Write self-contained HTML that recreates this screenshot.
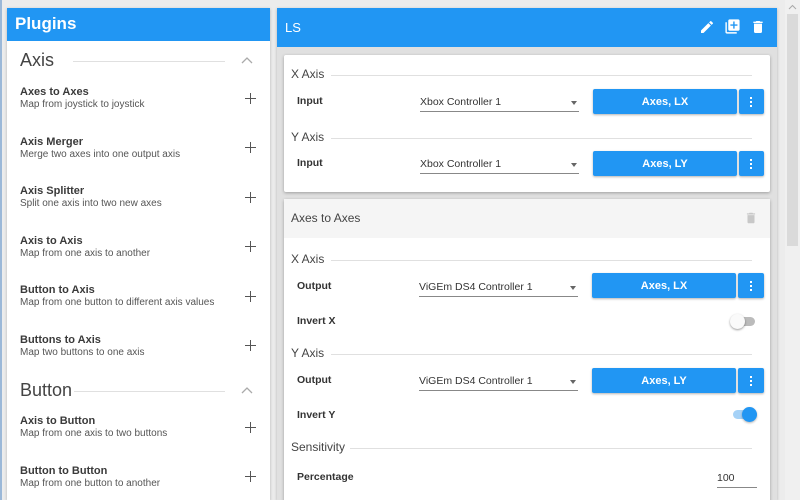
<!DOCTYPE html>
<html><head><meta charset="utf-8"><style>
*{margin:0;padding:0;box-sizing:border-box}
html,body{width:800px;height:500px;overflow:hidden}
body{background:#ececec;font-family:"Liberation Sans",sans-serif;color:#333;position:relative}
.a{position:absolute;white-space:nowrap}
.blue{background:#2196f3}
.t{font-size:11px;font-weight:bold;color:#3a3a3a}
.d{font-size:10px;color:#555}
.line{position:absolute;height:1px;background:#e0e0e0}
.plus{position:absolute;width:11px;height:11px}
.plus:before{content:"";position:absolute;left:5px;top:0;width:1px;height:11px;background:#555}
.plus:after{content:"";position:absolute;top:5px;left:0;width:11px;height:1px;background:#555}
.sec{font-size:12px;color:#444}
.lbl{font-size:10.5px;font-weight:bold;color:#333}
.sel{position:absolute;width:159px;height:20px;border-bottom:1px solid #888;font-size:10.5px;color:#333;padding-top:4px}
.sel:after{content:"";position:absolute;right:2px;top:9px;border:3.5px solid transparent;border-top:4px solid #666}
.btn{position:absolute;height:25px;background:#2196f3;color:#fff;font-size:11px;font-weight:bold;text-align:center;line-height:26px;border-radius:2px;box-shadow:0 1px 2px rgba(0,0,0,.3)}
.dots{position:absolute;width:2px;height:2px;background:#fff;box-shadow:0 4px 0 #fff,0 8px 0 #fff;top:8px}
</style></head><body>
<div class="a" style="left:0;top:0;width:2px;height:500px;background:#9bb8d8"></div>
<!-- left panel -->
<div class="a" style="left:7px;top:8px;width:263px;height:492px;background:#fff;box-shadow:0 1px 3px rgba(0,0,0,.25)"></div>
<div class="a blue" style="left:7px;top:8px;width:263px;height:33px"></div>
<div class="a" style="left:15px;top:14px;font-size:17px;font-weight:bold;color:#fff">Plugins</div>

<div class="a" style="left:20px;top:50px;font-size:18px;color:#444">Axis</div>
<div class="line" style="left:73px;top:61px;width:152px"></div>
<svg class="a" style="left:241px;top:56px" width="12" height="8"><path d="M1 7 L6 2 L11 7" fill="none" stroke="#aaa" stroke-width="1.3"/></svg>

<div class="a t" style="left:20px;top:86px">Axes to Axes</div><div class="a d" style="left:20px;top:99px">Map from joystick to joystick</div><div class="plus" style="left:245px;top:93px"></div>
<div class="a t" style="left:20px;top:136px">Axis Merger</div><div class="a d" style="left:20px;top:149px">Merge two axes into one output axis</div><div class="plus" style="left:245px;top:142px"></div>
<div class="a t" style="left:20px;top:185px">Axis Splitter</div><div class="a d" style="left:20px;top:198px">Split one axis into two new axes</div><div class="plus" style="left:245px;top:192px"></div>
<div class="a t" style="left:20px;top:235px">Axis to Axis</div><div class="a d" style="left:20px;top:248px">Map from one axis to another</div><div class="plus" style="left:245px;top:241px"></div>
<div class="a t" style="left:20px;top:284px">Button to Axis</div><div class="a d" style="left:20px;top:297px">Map from one button to different axis values</div><div class="plus" style="left:245px;top:291px"></div>
<div class="a t" style="left:20px;top:334px">Buttons to Axis</div><div class="a d" style="left:20px;top:347px">Map two buttons to one axis</div><div class="plus" style="left:245px;top:340px"></div>

<div class="a" style="left:20px;top:380px;font-size:18px;color:#444">Button</div>
<div class="line" style="left:74px;top:391px;width:151px"></div>
<svg class="a" style="left:241px;top:386px" width="12" height="8"><path d="M1 7 L6 2 L11 7" fill="none" stroke="#aaa" stroke-width="1.3"/></svg>
<div class="a t" style="left:20px;top:415px">Axis to Button</div><div class="a d" style="left:20px;top:428px">Map from one axis to two buttons</div><div class="plus" style="left:245px;top:422px"></div>
<div class="a t" style="left:20px;top:465px">Button to Button</div><div class="a d" style="left:20px;top:478px">Map from one button to another</div><div class="plus" style="left:245px;top:471px"></div>

<!-- right panel -->
<div class="a" style="left:277px;top:8px;width:500px;height:492px;background:#e0e0e0;box-shadow:0 1px 3px rgba(0,0,0,.25)"></div>
<div class="a blue" style="left:277px;top:8px;width:500px;height:39px"></div>
<div class="a" style="left:285px;top:20px;font-size:13px;color:#fff">LS</div>
<svg class="a" style="left:699px;top:19px" width="16" height="16" viewBox="0 0 24 24"><path fill="#fff" d="M3 17.25V21h3.75L17.81 9.94l-3.75-3.75L3 17.25zM20.71 7.04a1 1 0 000-1.41l-2.34-2.34a1 1 0 00-1.41 0l-1.83 1.83 3.75 3.75 1.83-1.83z"/></svg>
<svg class="a" style="left:724px;top:18px" width="17" height="17" viewBox="0 0 24 24"><path fill="#fff" d="M4 6H2v14c0 1.1.9 2 2 2h14v-2H4V6zm16-4H8c-1.1 0-2 .9-2 2v12c0 1.1.9 2 2 2h12c1.1 0 2-.9 2-2V4c0-1.1-.9-2-2-2zm-1 9h-4v4h-2v-4H9V9h4V5h2v4h4v2z"/></svg>
<svg class="a" style="left:750px;top:19px" width="16" height="16" viewBox="0 0 24 24"><path fill="#fff" d="M6 19c0 1.1.9 2 2 2h8c1.1 0 2-.9 2-2V7H6v12zM19 4h-3.5l-1-1h-5l-1 1H5v2h14V4z"/></svg>

<!-- card 1 -->
<div class="a" style="left:284px;top:55px;width:486px;height:137px;background:#fff;border-radius:2px;box-shadow:0 1px 3px rgba(0,0,0,.3)"></div>
<div class="a sec" style="left:291px;top:67px">X Axis</div><div class="line" style="left:331px;top:75px;width:421px"></div>
<div class="a lbl" style="left:297px;top:95px">Input</div>
<div class="sel" style="left:420px;top:92px">Xbox Controller 1</div>
<div class="btn" style="left:593px;top:89px;width:144px">Axes, LX</div>
<div class="btn" style="left:739px;top:89px;width:25px"><div class="dots" style="left:11px"></div></div>
<div class="a sec" style="left:291px;top:130px">Y Axis</div><div class="line" style="left:331px;top:138px;width:421px"></div>
<div class="a lbl" style="left:297px;top:157px">Input</div>
<div class="sel" style="left:420px;top:154px">Xbox Controller 1</div>
<div class="btn" style="left:593px;top:151px;width:144px">Axes, LY</div>
<div class="btn" style="left:739px;top:151px;width:25px"><div class="dots" style="left:11px"></div></div>

<!-- card 2 -->
<div class="a" style="left:284px;top:199px;width:486px;height:310px;background:#fff;border-radius:2px;box-shadow:0 1px 3px rgba(0,0,0,.3)"></div>
<div class="a" style="left:284px;top:199px;width:486px;height:39px;background:#f5f5f5"></div>
<div class="a" style="left:291px;top:211px;font-size:12px;color:#444">Axes to Axes</div>
<svg class="a" style="left:744px;top:211px" width="14" height="14" viewBox="0 0 24 24"><path fill="#c8c8c8" d="M6 19c0 1.1.9 2 2 2h8c1.1 0 2-.9 2-2V7H6v12zM19 4h-3.5l-1-1h-5l-1 1H5v2h14V4z"/></svg>

<div class="a sec" style="left:291px;top:252px">X Axis</div><div class="line" style="left:331px;top:260px;width:421px"></div>
<div class="a lbl" style="left:297px;top:280px">Output</div>
<div class="sel" style="left:419px;top:277px">ViGEm DS4 Controller 1</div>
<div class="btn" style="left:592px;top:273px;width:144px">Axes, LX</div>
<div class="btn" style="left:738px;top:273px;width:26px"><div class="dots" style="left:12px"></div></div>
<div class="a lbl" style="left:297px;top:315px">Invert X</div>
<div class="a" style="left:731px;top:317px;width:24px;height:9px;border-radius:5px;background:#bbb"></div>
<div class="a" style="left:730px;top:314px;width:15px;height:15px;border-radius:50%;background:#fafafa;box-shadow:0 1px 2px rgba(0,0,0,.4)"></div>

<div class="a sec" style="left:291px;top:346px">Y Axis</div><div class="line" style="left:331px;top:354px;width:421px"></div>
<div class="a lbl" style="left:297px;top:374px">Output</div>
<div class="sel" style="left:419px;top:371px">ViGEm DS4 Controller 1</div>
<div class="btn" style="left:592px;top:368px;width:144px">Axes, LY</div>
<div class="btn" style="left:738px;top:368px;width:26px"><div class="dots" style="left:12px"></div></div>
<div class="a lbl" style="left:297px;top:409px">Invert Y</div>
<div class="a" style="left:733px;top:410px;width:24px;height:9px;border-radius:5px;background:#a6d2f7"></div>
<div class="a" style="left:742px;top:407px;width:15px;height:15px;border-radius:50%;background:#2196f3;box-shadow:0 1px 2px rgba(0,0,0,.3)"></div>

<div class="a sec" style="left:291px;top:440px">Sensitivity</div><div class="line" style="left:350px;top:448px;width:402px"></div>
<div class="a lbl" style="left:297px;top:471px">Percentage</div>
<div class="a" style="left:717px;top:472px;width:40px;height:16px;border-bottom:1px solid #888;font-size:10.5px;color:#333">100</div>

<!-- scrollbar -->
<div class="a" style="left:785px;top:0;width:15px;height:500px;background:#f0f0f0"></div>
<div class="a" style="left:787px;top:14px;width:11px;height:232px;background:#dadada"></div>
<svg class="a" style="left:788px;top:4px" width="9" height="6"><path d="M1 5 L4.5 1.5 L8 5" fill="none" stroke="#aaa" stroke-width="1"/></svg>
</body></html>
